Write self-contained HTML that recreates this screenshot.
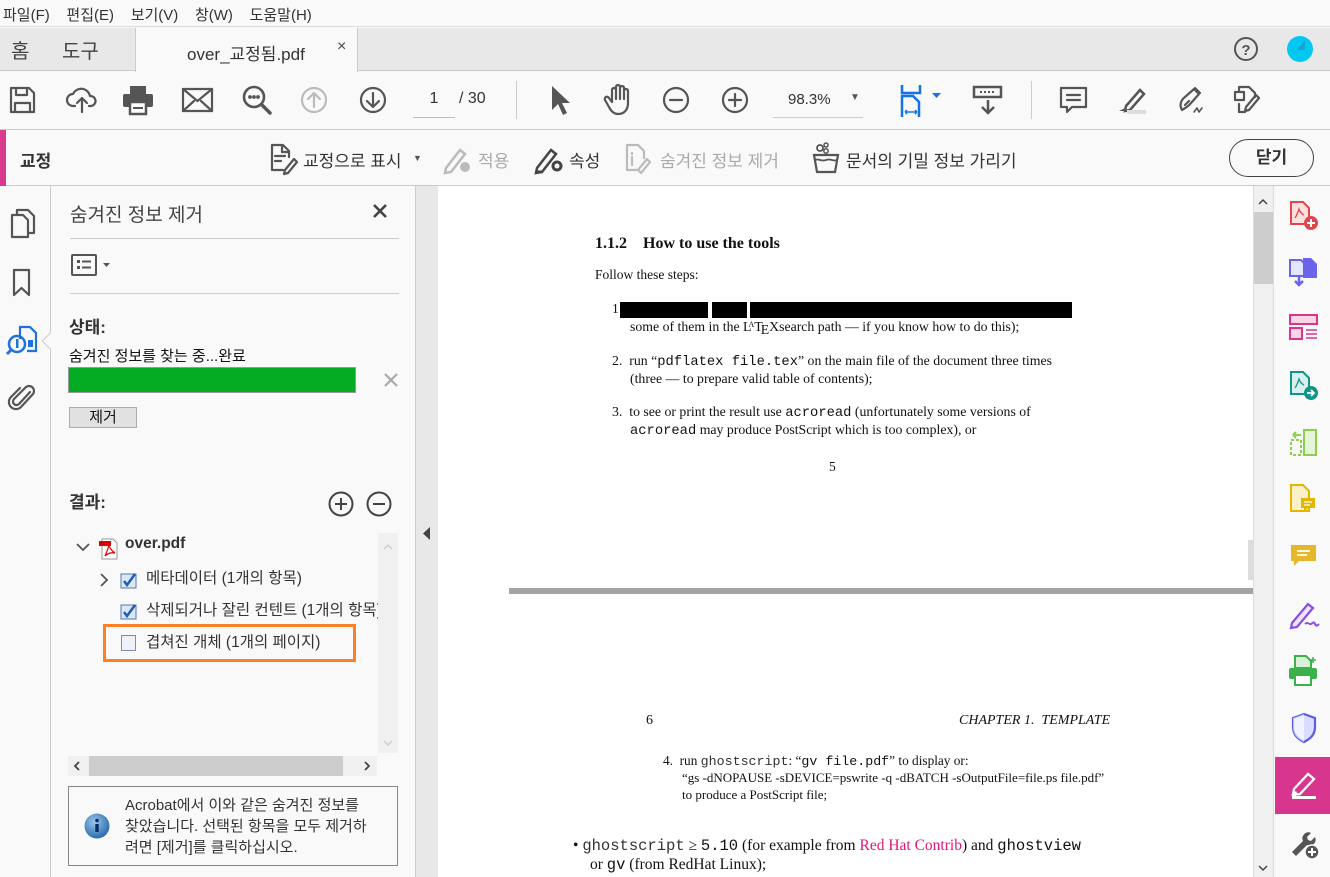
<!DOCTYPE html>
<html><head><meta charset="utf-8"><style>
*{margin:0;padding:0;box-sizing:border-box}
body{width:1330px;height:877px;overflow:hidden;position:relative;background:#f9f9f9;font-family:"Liberation Sans","Noto Sans CJK KR",sans-serif;color:#222}
.a{position:absolute;white-space:nowrap}
.k{font-family:"Liberation Sans","Noto Sans CJK KR",sans-serif}
.s{font-family:"Liberation Serif","Noto Serif CJK SC",serif;color:#111}
.m{font-family:"Liberation Mono",monospace}
svg{position:absolute;overflow:visible}
.ic{fill:none;stroke:#555;stroke-width:2.2;stroke-linecap:round;stroke-linejoin:round}
</style></head><body>
<!-- menu -->
<div class="a" style="left:0;top:0;width:1330px;height:27px;background:#f9f9f9;border-bottom:1px solid #ddd"></div>
<div class="a k" style="left:3px;top:4px;font-size:15px;color:#333">파일(F)&nbsp;&nbsp;&nbsp;&nbsp;편집(E)&nbsp;&nbsp;&nbsp;&nbsp;보기(V)&nbsp;&nbsp;&nbsp;&nbsp;창(W)&nbsp;&nbsp;&nbsp;&nbsp;도움말(H)</div>
<!-- tabs -->
<div class="a" style="left:0;top:28px;width:1330px;height:43px;background:#e8e8e8;border-bottom:1px solid #ccc"></div>
<div class="a" style="left:135px;top:28px;width:223px;height:44px;background:#f9f9f9;border-left:1px solid #ccc;border-right:1px solid #ccc"></div>
<div class="a k" style="left:11px;top:35px;font-size:20px;color:#444">홈</div>
<div class="a k" style="left:62px;top:35px;font-size:20px;color:#444">도구</div>
<div class="a k" style="left:187px;top:40px;font-size:17px;color:#333">over_교정됨.pdf</div>
<div class="a" style="left:337px;top:38px;font-size:16px;color:#444">×</div>
<svg style="left:1233px;top:36px" width="26" height="26"><circle cx="13" cy="13" r="11" fill="none" stroke="#555" stroke-width="2"/><text x="13" y="19" font-size="15" text-anchor="middle" fill="#555" font-family="Liberation Sans" font-weight="bold">?</text></svg>
<svg style="left:1285px;top:34px" width="30" height="30"><circle cx="15" cy="15" r="13" fill="#00c8f0"/><path d="M12 16 L20 6 L20 16 Z" fill="#17a3d3"/></svg>
<!-- toolbar -->
<div class="a" style="left:0;top:72px;width:1330px;height:58px;background:#f9f9f9;border-bottom:1px solid #ccc"></div>
<svg style="left:9px;top:86px" width="28" height="28" class="ic"><path d="M2 2h18l5 5v19H2z M7 2v7h11V2 M6 26v-9h15v9"/></svg>
<svg style="left:66px;top:84px" width="32" height="32" class="ic"><path d="M9 22H7a6 6 0 0 1 0-12 9 9 0 0 1 17 2 5 5 0 0 1 1 10h-2 M16 28V14 M11 19l5-5 5 5"/></svg>
<svg style="left:122px;top:86px" width="32" height="28"><rect x="8" y="0" width="16" height="8" fill="#555"/><rect x="1" y="8" width="30" height="13" rx="2" fill="#555"/><rect x="8" y="16" width="16" height="12" fill="#fff" stroke="#555" stroke-width="2.5"/><line x1="11" y1="22" x2="21" y2="22" stroke="#555" stroke-width="2"/></svg>
<svg style="left:182px;top:88px" width="32" height="24" class="ic"><rect x="1" y="1" width="29" height="22"/><path d="M1 1l14.5 12L30 1 M1 23l11-10 M30 23L19 13"/></svg>
<svg style="left:241px;top:84px" width="32" height="32" class="ic"><circle cx="13" cy="13" r="10" stroke-width="2.6"/><path d="M21 21l8 8" stroke-width="3.5"/><circle cx="9" cy="13" r=".8" fill="#555"/><circle cx="13" cy="13" r=".8" fill="#555"/><circle cx="17" cy="13" r=".8" fill="#555"/></svg>
<svg style="left:300px;top:86px" width="28" height="28" class="ic"><circle cx="14" cy="14" r="12" stroke="#bbb"/><path d="M14 21V8 M8 13l6-6 6 6" stroke="#bbb"/></svg>
<svg style="left:359px;top:86px" width="28" height="28" class="ic"><circle cx="14" cy="14" r="12"/><path d="M14 7v13 M8 15l6 6 6-6"/></svg>
<div class="a" style="left:413px;top:90px;width:42px;text-align:center;font-size:16px;color:#333">1</div>
<div class="a" style="left:413px;top:117px;width:42px;height:1px;background:#bbb"></div>
<div class="a" style="left:459px;top:90px;font-size:16px;color:#333">/ 30</div>
<div class="a" style="left:516px;top:81px;width:1px;height:38px;background:#ccc"></div>
<svg style="left:549px;top:84px" width="24" height="32"><path d="M3 2l0 24 6-6 5 11 4-2-5-10h8z" fill="#555"/></svg>
<svg style="left:602px;top:82px" width="34" height="34" class="ic"><path d="M10 20V8a2 2 0 0 1 4 0v9V5a2 2 0 0 1 4 0v12V6a2 2 0 0 1 4 0v11V9a2 2 0 0 1 4 0v12c0 7-4 11-10 11-4 0-7-3-9-7l-4-7a2 2 0 0 1 4-2l3 4"/></svg>
<svg style="left:662px;top:86px" width="28" height="28" class="ic"><circle cx="14" cy="14" r="12"/><path d="M8 14h12"/></svg>
<svg style="left:721px;top:86px" width="28" height="28" class="ic"><circle cx="14" cy="14" r="12"/><path d="M8 14h12 M14 8v12"/></svg>
<div class="a" style="left:788px;top:91px;font-size:15px;color:#333">98.3%</div>
<div class="a" style="left:850px;top:92px;font-size:10px;color:#555">▼</div>
<div class="a" style="left:773px;top:117px;width:90px;height:1px;background:#ccc"></div>
<svg style="left:900px;top:84px" width="44" height="34"><path d="M2 1v8h18V1" fill="none" stroke="#1473e6" stroke-width="2.5"/><path d="M2 33V12h11l6 6v15" fill="none" stroke="#1473e6" stroke-width="2.5"/><path d="M5 28h12 M5 28l2-2 M5 28l2 2 M17 28l-2-2 M17 28l-2 2" stroke="#1473e6" stroke-width="1.5"/><path d="M32 9h9l-4.5 5z" fill="#1473e6"/></svg>
<svg style="left:972px;top:84px" width="32" height="32"><rect x="2" y="3" width="27" height="10" fill="none" stroke="#555" stroke-width="2.5"/><g fill="#555"><rect x="8" y="7" width="2" height="2"/><rect x="12" y="7" width="2" height="2"/><rect x="16" y="7" width="2" height="2"/><rect x="20" y="7" width="2" height="2"/></g><path d="M16 16v13 M10 23l6 6 6-6" fill="none" stroke="#555" stroke-width="2.5"/></svg>
<div class="a" style="left:1031px;top:81px;width:1px;height:38px;background:#ccc"></div>
<svg style="left:1059px;top:86px" width="30" height="30" class="ic"><path d="M2 2h25v19H13l-5 5v-5H2z M8 9h13 M8 14h13"/></svg>
<svg style="left:1117px;top:84px" width="34" height="32"><path d="M9 22l14-16 4 4-14 16-5 1z" fill="none" stroke="#555" stroke-width="2.5"/><path d="M2 27h8l-2-3z" fill="#555"/><rect x="10" y="26" width="19" height="4" fill="#ddd"/></svg>
<svg style="left:1174px;top:84px" width="34" height="32" class="ic"><path d="M8 26c-3-5-1-10 3-13l9-8 5 5-8 9c-3 4-6 5-9 7z M11 21l4-4 M21 4l5 5"/><path d="M20 28l3-4 2 4 3-4" stroke-width="1.6"/></svg>
<svg style="left:1231px;top:84px" width="34" height="32" class="ic"><path d="M8 6V3h10l6 6v4 M4 8h9v8H4z M8 20v8h6 M28 14l-10 12-4 1 1-4 10-12z"/></svg>
<!-- redact bar -->
<div class="a" style="left:0;top:130px;width:1330px;height:56px;background:#f9f9f9;border-bottom:1px solid #ccc"></div>
<div class="a" style="left:0;top:130px;width:6px;height:56px;background:#d83a8c"></div>
<div class="a k" style="left:20px;top:147px;font-size:17px;font-weight:bold;color:#333">교정</div>
<svg style="left:269px;top:143px" width="30" height="30" class="ic"><path d="M14 27H3V2h11l6 6v6 M13 2v7h7 M6 13h10 M6 18h6 M16 27l9-11 3 3-9 11-4 1z"/></svg>
<div class="a k" style="left:303px;top:147px;font-size:17px;color:#333">교정으로 표시</div>
<div class="a" style="left:413px;top:153px;font-size:9px;color:#555">▼</div>
<svg style="left:442px;top:143px" width="30" height="30"><path d="M4 25l14-18 5 4-14 18-6 1z" fill="none" stroke="#bbb" stroke-width="2.5"/><circle cx="23" cy="24" r="5" fill="#bbb"/></svg>
<div class="a k" style="left:478px;top:147px;font-size:17px;color:#aaa">적용</div>
<svg style="left:533px;top:143px" width="32" height="30"><path d="M4 25l14-18 5 4-14 18-6 1z" fill="none" stroke="#444" stroke-width="2.5"/><path d="M3 29h6" stroke="#444" stroke-width="3"/><circle cx="24" cy="23" r="4" fill="none" stroke="#444" stroke-width="3"/></svg>
<div class="a k" style="left:569px;top:147px;font-size:17px;color:#333">속성</div>
<svg style="left:624px;top:143px" width="30" height="30" class="ic"><path d="M14 27H3V2h11l6 6v7 M8 10v1 M8 14v8 M14 27l9-11 3 3-9 11z" stroke="#bbb"/></svg>
<div class="a k" style="left:660px;top:147px;font-size:17px;color:#aaa">숨겨진 정보 제거</div>
<svg style="left:812px;top:142px" width="28" height="32"><circle cx="8" cy="6" r="3" fill="none" stroke="#555" stroke-width="1.8"/><circle cx="14" cy="3" r="2" fill="none" stroke="#555" stroke-width="1.5"/><circle cx="14" cy="9" r="2.2" fill="none" stroke="#555" stroke-width="1.5"/><path d="M2 13h24l-3 17H5z" fill="none" stroke="#555" stroke-width="2.2"/><path d="M3 18c4-2 6 2 11 0s7 2 11 0" fill="none" stroke="#555" stroke-width="1.8"/></svg>
<div class="a k" style="left:846px;top:147px;font-size:17px;color:#333">문서의 기밀 정보 가리기</div>
<div class="a k" style="left:1229px;top:139px;width:85px;height:38px;border:1.5px solid #444;border-radius:19px;text-align:center;line-height:35px;font-size:17px;font-weight:bold;color:#333">닫기</div>
<!-- left icon column -->
<div class="a" style="left:50px;top:186px;width:1px;height:691px;background:#ccc"></div>
<svg style="left:10px;top:208px" width="28" height="32" class="ic"><path d="M7 6V2h11l6 6v17h-6 M2 7h11l5 5v17H2z"/></svg>
<svg style="left:12px;top:268px" width="20" height="30" class="ic"><path d="M2 2h15v25l-7.5-7L2 27z"/></svg>
<svg style="left:6px;top:325px" width="32" height="32"><path d="M14 14V2h10l6 6v18h-9" fill="none" stroke="#1f73d8" stroke-width="2.2"/><circle cx="11" cy="19" r="8" fill="none" stroke="#1f73d8" stroke-width="2.5"/><path d="M5 25l-4 4" stroke="#1f73d8" stroke-width="3"/><rect x="10" y="14" width="2.5" height="9" fill="#1f73d8"/><rect x="22" y="15" width="5" height="7" fill="#1f73d8"/></svg>
<div class="a" style="left:44px;top:335px;width:12px;height:12px;background:#f9f9f9;border-left:1px solid #ccc;border-bottom:1px solid #ccc;transform:rotate(45deg)"></div>
<svg style="left:8px;top:382px" width="28" height="30" class="ic"><path d="M22 10L11 22a3.5 3.5 0 0 1-5-5L18 5a5 5 0 0 1 7 7L13 25a7 7 0 0 1-10-10l9-9"/></svg>
<!-- panel -->
<div class="k a" style="left:70px;top:200px;font-size:19px;color:#444">숨겨진 정보 제거</div>
<svg style="left:372px;top:203px" width="16" height="16"><path d="M2 2l12 12M14 2L2 14" stroke="#444" stroke-width="2.6"/></svg>
<div class="a" style="left:70px;top:238px;width:329px;height:1px;background:#ccc"></div>
<svg style="left:71px;top:254px" width="40" height="22"><rect x="1" y="1" width="24" height="20" rx="1" fill="none" stroke="#555" stroke-width="2"/><rect x="6" y="6" width="3" height="3" fill="#555"/><rect x="6" y="12" width="3" height="3" fill="#555"/><path d="M11 7.5h9M11 13.5h9" stroke="#555" stroke-width="2"/><path d="M32 9h7l-3.5 4z" fill="#555"/></svg>
<div class="a" style="left:70px;top:293px;width:329px;height:1px;background:#ccc"></div>
<div class="a k" style="left:69px;top:313px;font-size:17px;font-weight:bold;color:#333">상태:</div>
<div class="a k" style="left:69px;top:345px;font-size:15px;color:#111">숨겨진 정보를 찾는 중...완료</div>
<div class="a" style="left:68px;top:367px;width:288px;height:26px;background:#03ac23;border:1px solid #999"></div>
<svg style="left:384px;top:373px" width="14" height="14"><path d="M1 1l12 12M13 1L1 13" stroke="#aaa" stroke-width="2.2"/></svg>
<div class="a k" style="left:69px;top:407px;width:68px;height:21px;background:#e1e1e1;border:1px solid #adadad;text-align:center;font-size:15px;line-height:19px;color:#111">제거</div>
<div class="a k" style="left:69px;top:488px;font-size:17px;font-weight:bold;color:#333">결과:</div>
<svg style="left:328px;top:491px" width="26" height="26"><circle cx="13" cy="13" r="11.5" fill="none" stroke="#444" stroke-width="2"/><path d="M7 13h12M13 7v12" stroke="#444" stroke-width="2"/></svg>
<svg style="left:366px;top:491px" width="26" height="26"><circle cx="13" cy="13" r="11.5" fill="none" stroke="#444" stroke-width="2"/><path d="M7 13h12" stroke="#444" stroke-width="2"/></svg>
<!-- tree -->
<div class="a" style="left:378px;top:533px;width:20px;height:220px;background:#f0f0f0"></div>
<svg style="left:383px;top:544px" width="10" height="6"><path d="M1 5l4-4 4 4" fill="none" stroke="#ccc" stroke-width="1.3"/></svg>
<svg style="left:383px;top:740px" width="10" height="6"><path d="M1 1l4 4 4-4" fill="none" stroke="#ccc" stroke-width="1.3"/></svg>
<svg style="left:76px;top:542px" width="14" height="10"><path d="M1 2l6 6 6-6" fill="none" stroke="#555" stroke-width="1.8"/></svg>
<svg style="left:99px;top:538px" width="20" height="22"><path d="M3 1h11l4 4v16H3z" fill="#fff" stroke="#999"/><rect x="0" y="3" width="12" height="5" fill="#d00"/><path d="M6 18c2-5 4-9 4-12 0 4 3 7 6 9-4-1-8 1-10 3z" fill="none" stroke="#d00" stroke-width="1.2"/></svg>
<div class="a" style="left:125px;top:535px;font-size:15.5px;font-weight:bold;color:#333">over.pdf</div>
<svg style="left:99px;top:573px" width="10" height="14"><path d="M2 1l6 6-6 6" fill="none" stroke="#555" stroke-width="1.8"/></svg>
<svg style="left:120px;top:571px" width="18" height="18"><rect x="1" y="3" width="15" height="14" fill="#dbe7f6" stroke="#5577aa"/><path d="M4 10l3 4 8-11" fill="none" stroke="#1f5db3" stroke-width="2.5"/></svg>
<div class="a k" style="left:146px;top:566px;font-size:15.5px;color:#333">메타데이터 (1개의 항목)</div>
<svg style="left:120px;top:602px" width="18" height="18"><rect x="1" y="3" width="15" height="14" fill="#dbe7f6" stroke="#5577aa"/><path d="M4 10l3 4 8-11" fill="none" stroke="#1f5db3" stroke-width="2.5"/></svg>
<div class="a k" style="left:146px;top:598px;width:232px;overflow:hidden;font-size:15.5px;color:#333">삭제되거나 잘린 컨텐트 (1개의 항목)</div>
<div class="a" style="left:103px;top:624px;width:253px;height:38px;border:3px solid #fb8126"></div>
<div class="a" style="left:121px;top:635px;width:15px;height:16px;background:#eef2f8;border:1px solid #7a8fb0"></div>
<div class="a k" style="left:146px;top:630px;font-size:15.5px;color:#333">겹쳐진 개체 (1개의 페이지)</div>
<div class="a" style="left:68px;top:756px;width:309px;height:20px;background:#f0f0f0"></div>
<div class="a" style="left:89px;top:756px;width:254px;height:20px;background:#cdcdcd"></div>
<svg style="left:73px;top:761px" width="8" height="10"><path d="M6 1L2 5l4 4" fill="none" stroke="#444" stroke-width="1.8"/></svg>
<svg style="left:363px;top:761px" width="8" height="10"><path d="M2 1l4 4-4 4" fill="none" stroke="#444" stroke-width="1.8"/></svg>
<div class="a" style="left:68px;top:786px;width:330px;height:80px;border:1px solid #888"></div>
<svg style="left:83px;top:812px" width="28" height="28"><defs><radialGradient id="g" cx=".4" cy=".35" r=".7"><stop offset="0" stop-color="#9cc6ea"/><stop offset="1" stop-color="#2266aa"/></radialGradient></defs><circle cx="14" cy="14" r="12.5" fill="url(#g)"/><circle cx="14" cy="8.5" r="1.8" fill="#0a2a6a"/><rect x="12.3" y="12" width="3.4" height="8" fill="#0a2a6a"/></svg>
<div class="a k" style="left:125px;top:795px;font-size:15px;line-height:21px;color:#333">Acrobat에서 이와 같은 숨겨진 정보를<br>찾았습니다. 선택된 항목을 모두 제거하<br>려면 [제거]를 클릭하십시오.</div>
<!-- collapse strip -->
<div class="a" style="left:415px;top:186px;width:23px;height:691px;background:#e8e8e8;border-left:1px solid #ccc"></div>
<svg style="left:423px;top:527px" width="8" height="13"><path d="M7 0v13L0 6.5z" fill="#444"/></svg>
<!-- doc -->
<div class="a" style="left:438px;top:186px;width:815px;height:691px;background:#fff"></div>
<div class="a s" style="left:595px;top:235px;font-size:16px;font-weight:bold">1.1.2&nbsp;&nbsp;&nbsp;&nbsp;How to use the tools</div>
<div class="a s" style="left:595px;top:267px;font-size:13.5px">Follow these steps:</div>
<div class="a s" style="left:612px;top:301px;font-size:13.5px">1</div>
<div class="a" style="left:620px;top:302px;width:88px;height:16px;background:#000"></div>
<div class="a" style="left:712px;top:302px;width:35px;height:16px;background:#000"></div>
<div class="a" style="left:750px;top:302px;width:322px;height:16px;background:#000"></div>
<div class="a s" style="left:630px;top:319px;font-size:13.8px">some of them in the L<span style="font-size:8px;vertical-align:4px;margin-left:-3px">A</span>T<span style="position:relative;top:3px;margin-left:-2px">E</span>Xsearch path — if you know how to do this);</div>
<div class="a s" style="left:612px;top:353px;font-size:13.8px">2.&nbsp; run “<span class="m">pdflatex file.tex</span>” on the main file of the document three times</div>
<div class="a s" style="left:630px;top:371px;font-size:13.8px">(three — to prepare valid table of contents);</div>
<div class="a s" style="left:612px;top:404px;font-size:13.8px">3.&nbsp; to see or print the result use <span class="m">acroread</span> (unfortunately some versions of</div>
<div class="a s" style="left:630px;top:422px;font-size:13.8px"><span class="m">acroread</span> may produce PostScript which is too complex), or</div>
<div class="a s" style="left:829px;top:459px;font-size:13.5px">5</div>
<div class="a" style="left:509px;top:588px;width:744px;height:6px;background:#a4a4a4"></div>
<div class="a" style="left:1248px;top:540px;width:5px;height:40px;background:#ddd"></div>
<div class="a s" style="left:646px;top:713px;font-size:14px">6</div>
<div class="a s" style="left:959px;top:713px;font-size:14px;font-style:italic">CHAPTER 1.&nbsp; TEMPLATE</div>
<div class="a s" style="left:663px;top:753px;font-size:13.3px">4.&nbsp; run <span class="m" style="color:#333">ghostscript</span>: “<span class="m">gv file.pdf</span>” to display or:</div>
<div class="a s" style="left:682px;top:770px;font-size:13px">“gs -dNOPAUSE -sDEVICE=pswrite -q -dBATCH -sOutputFile=file.ps file.pdf”</div>
<div class="a s" style="left:682px;top:787px;font-size:13px">to produce a PostScript file;</div>
<div class="a s" style="left:573px;top:837px;font-size:15.5px">• <span class="m" style="color:#333">ghostscript</span> ≥ <span class="m">5.10</span> (for example from <span style="color:#e0157a">Red Hat Contrib</span>) and <span class="m">ghostview</span></div>
<div class="a s" style="left:590px;top:856px;font-size:15.5px">or <span class="m">gv</span> (from RedHat Linux);</div>
<!-- scrollbar -->
<div class="a" style="left:1253px;top:186px;width:21px;height:691px;background:#f0f0f0;border-left:1px solid #ddd;border-right:1px solid #ddd"></div>
<div class="a" style="left:1254px;top:212px;width:19px;height:72px;background:#cdcdcd"></div>
<svg style="left:1258px;top:199px" width="10" height="6"><path d="M1 5l4-4 4 4" fill="none" stroke="#444" stroke-width="1.5"/></svg>
<svg style="left:1258px;top:865px" width="10" height="6"><path d="M1 1l4 4 4-4" fill="none" stroke="#444" stroke-width="1.5"/></svg>
<!-- right rail -->
<div class="a" style="left:1275px;top:186px;width:55px;height:691px;background:#f9f9f9"></div>
<div class="a" style="left:1275px;top:757px;width:55px;height:57px;background:#d8358e"></div>
<svg style="left:1289px;top:201px" width="30" height="30"><path d="M2 1h12l6 6v16H2z" fill="#fde0e0" stroke="#e0474c" stroke-width="2"/><path d="M6 17c2-3 3-6 4-9 1 3 3 5 5 6" fill="none" stroke="#e0474c" stroke-width="1.3"/><circle cx="22" cy="22" r="7" fill="#e0474c"/><path d="M18 22h8M22 18v8" stroke="#fff" stroke-width="2"/></svg>
<svg style="left:1289px;top:257px" width="30" height="30"><path d="M1 3h11l5 5v11H1z" fill="#e5e5ff" stroke="#6b63e8" stroke-width="2"/><path d="M14 1h8l6 6v14H14z" fill="#6b63e8"/><path d="M10 18v10 M6 24l4 4 4-4" fill="none" stroke="#6b63e8" stroke-width="2.5"/></svg>
<svg style="left:1289px;top:314px" width="30" height="28"><rect x="1" y="1" width="27" height="9" fill="#f9d5e6" stroke="#d8358e" stroke-width="2"/><rect x="1" y="14" width="12" height="11" fill="#f9d5e6" stroke="#d8358e" stroke-width="2"/><path d="M17 16h11M17 20h11M17 24h11" stroke="#d8358e" stroke-width="1.5"/></svg>
<svg style="left:1289px;top:371px" width="30" height="30"><path d="M2 1h12l6 6v16H2z" fill="#d8f0ee" stroke="#12948a" stroke-width="2"/><path d="M6 17c2-3 3-6 4-9 1 3 3 5 5 6" fill="none" stroke="#12948a" stroke-width="1.3"/><circle cx="22" cy="22" r="7" fill="#12948a"/><path d="M18 22h7M22 19l3 3-3 3" fill="none" stroke="#fff" stroke-width="1.8"/></svg>
<svg style="left:1289px;top:428px" width="30" height="30"><rect x="15" y="2" width="12" height="25" fill="#e6f5d8" stroke="#8bcf4d" stroke-width="2"/><path d="M2 12h10v15H2z" fill="none" stroke="#8bcf4d" stroke-width="2" stroke-dasharray="3 2"/><path d="M4 7h8 M4 7l3-3 M4 7l3 3" fill="none" stroke="#8bcf4d" stroke-width="2"/></svg>
<svg style="left:1289px;top:484px" width="30" height="30"><path d="M2 1h12l6 6v20H2z" fill="#fbf0c8" stroke="#e0b800" stroke-width="2"/><rect x="12" y="14" width="14" height="10" fill="#e0b800"/><path d="M15 24v4l4-4" fill="#e0b800"/><path d="M15 18h8M15 21h6" stroke="#fff" stroke-width="1.3"/></svg>
<svg style="left:1289px;top:543px" width="30" height="28"><path d="M2 2h25v16H10l-5 5v-5H2z" fill="#e5b82a"/><path d="M8 8h13M8 12h10" stroke="#fff" stroke-width="1.8"/></svg>
<svg style="left:1289px;top:598px" width="32" height="30"><path d="M3 25l16-19 5 4-16 19-6 1z" fill="#ece4ff" stroke="#8a4fe0" stroke-width="2.2"/><path d="M16 26c3-3 4 1 6 0s3-3 4 0 3 1 4 0" fill="none" stroke="#8a4fe0" stroke-width="2"/></svg>
<svg style="left:1287px;top:655px" width="32" height="32"><path d="M8 1h11l5 5v7H8z" fill="#d7f0d7" stroke="#3ab14a" stroke-width="2"/><rect x="2" y="13" width="28" height="11" rx="2" fill="#3ab14a"/><rect x="8" y="20" width="16" height="10" fill="#fff" stroke="#3ab14a" stroke-width="2"/><path d="M26 2v6M23 5h6" stroke="#3ab14a" stroke-width="1.5"/></svg>
<svg style="left:1291px;top:712px" width="26" height="32"><path d="M13 2l11 4v9c0 8-5 12-11 15C7 27 2 23 2 15V6z" fill="#dcdcff" stroke="#5a5fe0" stroke-width="2.2"/><path d="M13 2v28c-6-3-11-7-11-15V6z" fill="#fff" opacity=".6"/></svg>
<svg style="left:1289px;top:771px" width="30" height="28"><path d="M5 18l14-15 6 5-14 15-7 1z" fill="none" stroke="#fff" stroke-width="2.3"/><path d="M3 25h24v3H3z" fill="#fff"/><path d="M2 24h7l-2-4z" fill="#fff"/></svg>
<svg style="left:1288px;top:828px" width="32" height="32"><path d="M4 24l11-11a6 6 0 0 1 8-8l-4 4 1 3 3 1 4-4a6 6 0 0 1-8 8L8 28z" fill="#555"/><circle cx="24" cy="24" r="7" fill="#555" stroke="#f9f9f9" stroke-width="1.5"/><path d="M20 24h8M24 20v8" stroke="#fff" stroke-width="2"/></svg>
</body></html>
